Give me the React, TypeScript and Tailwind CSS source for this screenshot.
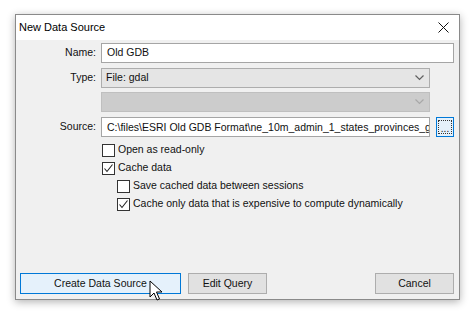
const font = "font-['Liberation_Sans',Arial,sans-serif]";

const Chevron = ({ light }: { light?: boolean }) => (
  <svg width="9" height="6" viewBox="0 0 9 6" className="mr-[5px]">
    <polyline
      points="0.5,0.5 4.5,4.5 8.5,0.5"
      fill="none"
      stroke={light ? "#a8a8a8" : "#606060"}
      strokeWidth="1.2"
    />
  </svg>
);

const CheckBox = ({ checked, label }: { checked?: boolean; label: string }) => (
  <div className="flex items-center h-[18px]">
    <div className="w-[13px] h-[13px] border border-[#333] bg-white flex items-center justify-center">
      {checked && (
        <svg width="11" height="11" viewBox="0 0 11 11">
          <polyline
            points="1.5,5.5 4,8.5 9.5,1.5"
            fill="none"
            stroke="#222"
            strokeWidth="1.1"
          />
        </svg>
      )}
    </div>
    <span className="ml-[3px] text-[10.5px] text-[#111]">{label}</span>
  </div>
);

const Label = ({ text }: { text: string }) => (
  <div className="w-[81px] pr-[1px] text-right text-[10.5px] text-[#111]">{text}</div>
);

export default function App() {
  return (
    <div className={`w-[474px] h-[315px] bg-white pl-[15px] pt-[14px] ${font}`}>
      <div className="w-[445px] h-[286px] border border-[#8a8a8a] shadow-[0_2px_8px_rgba(0,0,0,0.3)] bg-[#f0f0f0] flex flex-col relative">
        {/* title bar */}
        <div className="h-[25px] bg-white flex items-center justify-between pl-[3px] pr-[10px]">
          <span className="text-[11px] text-black">New Data Source</span>
          <svg width="11" height="11" viewBox="0 0 11 11">
            <path d="M0.5 0.5 L10.5 10.5 M10.5 0.5 L0.5 10.5" stroke="#111" strokeWidth="1" />
          </svg>
        </div>

        <div className="flex flex-col pt-[3px] pr-[5px] flex-1">
          <div className="flex items-center gap-[4px]">
            <Label text="Name:" />
            <div className="flex-1 h-[20px] bg-white border border-[#a5a5a5] flex items-center pl-[5px] text-[10.5px] text-[#111]">
              Old GDB
            </div>
          </div>

          <div className="flex items-center gap-[4px] mt-[5px]">
            <Label text="Type:" />
            <div className="w-[329px] h-[20px] bg-[#e5e5e5] border border-[#adadad] flex items-center justify-between pl-[4px] text-[10.5px] text-[#111]">
              File: gdal
              <Chevron />
            </div>
          </div>

          <div className="flex items-center gap-[4px] mt-[4px]">
            <div className="w-[81px]" />
            <div className="w-[329px] h-[20px] bg-[#cccccc] border border-[#bfbfbf] flex items-center justify-end">
              <Chevron light />
            </div>
          </div>

          <div className="flex items-center gap-[4px] mt-[5px]">
            <Label text="Source:" />
            <div className="w-[329px] h-[20px] bg-white border border-[#a5a5a5] pl-[5px] text-[10.5px] leading-[18px] text-[#111] overflow-hidden whitespace-nowrap">
              C:\files\ESRI Old GDB Format\ne_10m_admin_1_states_provinces_ge
            </div>
            <div className="ml-[2px] w-[18px] h-[20px] border border-[#0078d7] bg-[#e5f1fb] flex items-center justify-center">
              <div className="w-[14px] h-[14px] border border-dotted border-[#333] flex items-end justify-center text-[10px] leading-[9px] text-[#111]">
                ...
              </div>
            </div>
          </div>

          <div className="flex flex-col pl-[86px] mt-[4px]">
            <CheckBox label="Open as read-only" />
            <CheckBox checked label="Cache data" />
            <div className="flex flex-col pl-[15px]">
              <CheckBox label="Save cached data between sessions" />
              <CheckBox checked label="Cache only data that is expensive to compute dynamically" />
            </div>
          </div>

          <div className="flex-1" />

          <div className="flex items-center pl-[4px] pb-[5px] text-[10.5px] text-[#111]">
            <div className="w-[161px] h-[21px] bg-[#e5f1fb] border border-[#0078d7] flex items-center justify-center">
              Create Data Source
            </div>
            <div className="ml-[7px] w-[79px] h-[21px] bg-[#e1e1e1] border border-[#adadad] flex items-center justify-center">
              Edit Query
            </div>
            <div className="flex-1" />
            <div className="w-[79px] h-[21px] bg-[#e1e1e1] border border-[#adadad] flex items-center justify-center">
              Cancel
            </div>
          </div>
        </div>

        {/* mouse cursor */}
        <svg
          width="14"
          height="22"
          viewBox="0 0 14 22"
          className="absolute left-[133px] top-[265px]"
        >
          <path
            d="M1 1 L1 17 L5 13 L8 20 L10.5 19 L7.5 12 L13 12 Z"
            fill="white"
            stroke="black"
            strokeWidth="1"
            strokeLinejoin="round"
          />
        </svg>
      </div>
    </div>
  );
}
